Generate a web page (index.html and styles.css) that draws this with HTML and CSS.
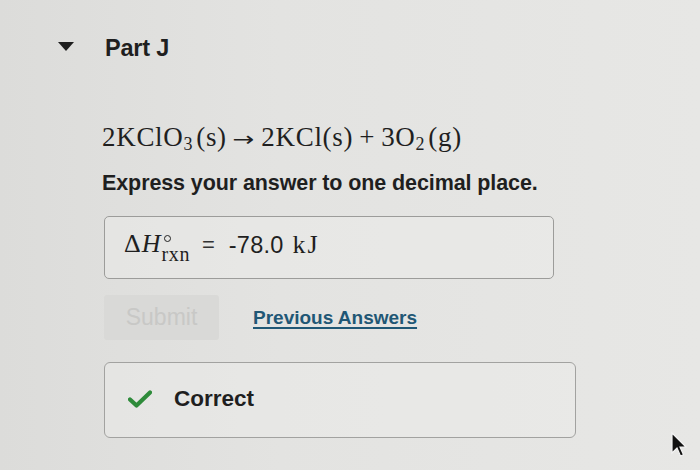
FILE: index.html
```html
<!DOCTYPE html>
<html>
<head>
<meta charset="utf-8">
<link rel="stylesheet" href="styles.css">
</head>
<body>
<div class="page">
  <div class="header">
    <svg class="caret" width="16" height="9" viewBox="0 0 16 9"><path d="M0 0H16L8 9Z" fill="#1e1e1e"/></svg>
    <span class="part">Part J</span>
  </div>
  <div class="content">
    <div class="equation">2KClO<sub>3</sub><span class="sp">(s)</span><span class="arrow">→</span>2KCl(s)<span class="plus">+</span>3O<sub>2</sub><span class="sp">(g)</span></div>
    <div class="prompt">Express your answer to one decimal place.</div>
    <div class="answer">
      <span class="math">Δ<i>H</i><span class="supsub"><span class="deg"><span class="ring"></span></span><span class="rxn">rxn</span></span></span>
      <span class="eq">=</span>
      <span class="val">-78.0</span>
      <span class="unit">kJ</span>
    </div>
    <div class="actions">
      <button class="submit">Submit</button>
      <a class="prev" href="#">Previous Answers</a>
    </div>
    <div class="result">
      <svg class="check" width="24" height="18" viewBox="0 0 24 18"><path d="M2 9.5L8.5 15.5L22 2.5" fill="none" stroke="#2e8b3a" stroke-width="4.2" stroke-linecap="round" stroke-linejoin="round"/></svg>
      <span class="correct">Correct</span>
    </div>
  </div>
</div>
<svg class="cursor" width="18" height="28" viewBox="0 0 18 28"><path d="M2 2V22L7 17L10.5 25L13.5 23.7L10 16H16Z" fill="#111" stroke="#f2f2f2" stroke-width="1.2"/></svg>
</body>
</html>
```
FILE: styles.css
```css
html, body {
  margin: 0;
  padding: 0;
}
body {
  width: 700px;
  height: 470px;
  overflow: hidden;
  background: linear-gradient(90deg, #dcdcda 0%, #e3e3e1 40%, #e7e7e5 100%);
  font-family: "Liberation Sans", Arial, sans-serif;
  color: #1f1f1f;
  position: relative;
}
.page {
  padding: 34px 0 0 58px;
}
.header {
  display: flex;
  align-items: center;
  gap: 31px;
  height: 28px;
}
.caret {
  display: block;
  margin-top: -3px;
}
.part {
  font-weight: bold;
  font-size: 23.5px;
  letter-spacing: -0.2px;
}
.content {
  margin-left: 44px;
}
.equation {
  margin-top: 58px;
  font-family: "Liberation Serif", "Times New Roman", serif;
  font-size: 27px;
  letter-spacing: 0.7px;
  line-height: 34px;
  height: 34px;
  white-space: nowrap;
}
.equation sub {
  font-size: 18px;
  vertical-align: -4px;
  line-height: 0;
}
.equation .sp {
  margin-left: 3px;
}
.arrow {
  display: inline-block;
  font-family: "DejaVu Sans", sans-serif;
  font-size: 20px;
  transform: scaleX(1.3);
  margin: 0 9px 0 8px;
}
.plus {
  margin: 0 6px;
}
.prompt {
  margin-top: 16px;
  font-weight: bold;
  font-size: 21.5px;
  line-height: 26px;
  letter-spacing: -0.1px;
}
.answer {
  margin-top: 20px;
  width: 450px;
  height: 63px;
  box-sizing: border-box;
  border: 1.5px solid #9c9c9a;
  border-radius: 5px;
  display: flex;
  align-items: center;
  padding: 0 0 5px 19px;
  margin-left: 2px;
  background: rgba(236, 236, 234, 0.5);
}
.math {
  font-family: "Liberation Serif", "Times New Roman", serif;
  font-size: 26px;
  white-space: nowrap;
}
.math i {
  margin-left: 1px;
  letter-spacing: 1px;
}
.supsub {
  display: inline-block;
  vertical-align: -9px;
  line-height: 1;
}
.deg {
  display: block;
  height: 11px;
}
.ring {
  display: block;
  width: 5px;
  height: 5px;
  border: 1.4px solid #222;
  border-radius: 50%;
  margin: 1px 0 0 2px;
}
.rxn {
  display: block;
  font-size: 20px;
  line-height: 16px;
  letter-spacing: 0.6px;
}
.eq {
  font-size: 22px;
  margin: 0 14px 0 12px;
  color: #333;
}
.val {
  font-size: 23.5px;
  letter-spacing: 0.2px;
}
.unit {
  font-family: "Liberation Serif", "Times New Roman", serif;
  font-size: 26px;
  letter-spacing: 2px;
  margin-left: 9px;
}
.actions {
  margin-top: 16px;
  display: flex;
  align-items: center;
  gap: 34px;
  margin-left: 2px;
}
.submit {
  width: 115px;
  height: 45px;
  border: none;
  border-radius: 3px;
  background: #d9d9d7;
  color: #c8c8c6;
  font-family: "Liberation Sans", Arial, sans-serif;
  font-size: 23px;
  padding: 0;
}
.prev {
  color: #1f5775;
  font-weight: bold;
  font-size: 19px;
  text-decoration: underline;
  text-decoration-thickness: 2px;
  text-underline-offset: 3px;
}
.result {
  margin-top: 22px;
  margin-left: 2px;
  width: 472px;
  height: 76px;
  box-sizing: border-box;
  border: 1.5px solid #a2a2a0;
  border-radius: 6px;
  display: flex;
  align-items: center;
  padding: 0 0 2px 23px;
  gap: 22px;
  background: rgba(236, 236, 234, 0.5);
}
.check {
  display: block;
}
.correct {
  font-weight: bold;
  font-size: 22.5px;
}
.cursor {
  position: absolute;
  left: 670px;
  top: 431px;
}
```
